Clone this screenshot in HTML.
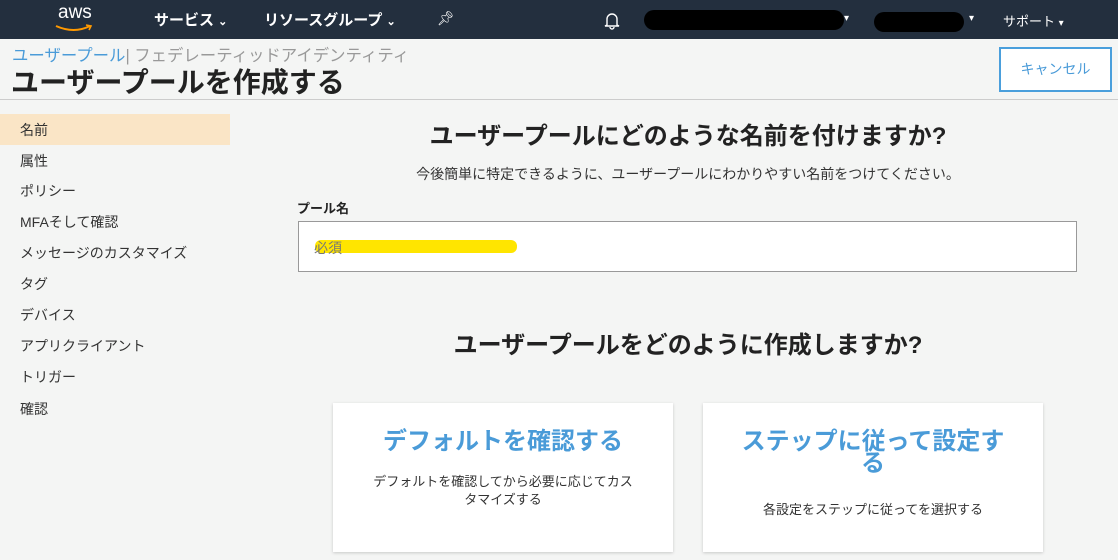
<!DOCTYPE html>
<html><head><meta charset="utf-8"><style>
*{margin:0;padding:0;box-sizing:border-box}
body{width:1118px;height:560px;overflow:hidden;background:#f4f5f4;font-family:"Liberation Sans","Noto Sans CJK JP",sans-serif;color:#333;position:relative}
.a{position:absolute;white-space:nowrap}
.nav{position:absolute;left:0;top:0;width:1118px;height:39px;background:#232f3e}
.nav .t{color:#fff;font-weight:bold;font-size:15px;top:9px}
.side{font-size:14px;color:#333;left:20px}
.card{position:absolute;top:403px;width:340px;height:149px;background:#fff;box-shadow:0 1px 3px rgba(0,0,0,.18);text-align:center}
.card h3{color:#4a9bd8;font-size:24px;line-height:22px;margin-top:28px;padding:0 30px;font-weight:bold}
.card p{font-size:13px;line-height:18px;margin-top:20px;padding:0 28px}
</style></head><body>
<div class="nav">
 <div class="a" style="left:58px;top:2px;color:#fff;font-size:19px">aws</div>
 <svg class="a" style="left:54px;top:24px" width="40" height="9"><path d="M2 2 Q20 10 36 2" stroke="#f90" stroke-width="2" fill="none"/><path d="M32 1 L37 2 L35 6" stroke="#f90" stroke-width="1.6" fill="none"/></svg>
 <div class="a t" style="left:154px">サービス <span style="font-size:11px">⌄</span></div>
 <div class="a t" style="left:264px">リソースグループ <span style="font-size:11px">⌄</span></div>
 <div class="a" style="left:437px;top:10px;color:#fff;font-size:14px">📌︎</div>
 <svg class="a" style="left:603px;top:10px" width="18" height="20"><path d="M4 15 V9 a5 5 0 0 1 10 0 V15 L16 16 H2 Z M7 17 a2 2 0 0 0 4 0" stroke="#fff" stroke-width="1.4" fill="none"/></svg>
 <div class="a" style="left:644px;top:10px;width:200px;height:20px;background:#000;border-radius:10px"></div>
 <div class="a" style="left:844px;top:13px;color:#fff;font-size:10px">▾</div>
 <div class="a" style="left:874px;top:12px;width:90px;height:20px;background:#000;border-radius:10px"></div>
 <div class="a" style="left:969px;top:13px;color:#fff;font-size:10px">▾</div>
 <div class="a" style="left:1003px;top:11px;color:#fff;font-size:13px">サポート <span style="font-size:10px">▾</span></div>
</div>
<div class="a" style="left:12px;top:42px;font-size:16.4px;color:#999"><span style="color:#4a9bd8">ユーザープール</span>| フェデレーティッドアイデンティティ</div>
<div class="a" style="left:11px;top:61px;font-size:28px;font-weight:bold;color:#222">ユーザープールを作成する</div>
<div class="a" style="left:999px;top:47px;width:113px;height:45px;border:2px solid #4a9fdc;background:#fff;color:#4a9bd8;font-size:14px;text-align:center;line-height:41px">キャンセル</div>
<div class="a" style="left:0;top:99px;width:1118px;height:1px;background:#ccc"></div>
<div class="a" style="left:0;top:114px;width:230px;height:31px;background:#fae5c6"></div>
<div class="a side" style="top:120px">名前</div>
<div class="a side" style="top:151px">属性</div>
<div class="a side" style="top:181px">ポリシー</div>
<div class="a side" style="top:212px">MFAそして確認</div>
<div class="a side" style="top:243px">メッセージのカスタマイズ</div>
<div class="a side" style="top:274px">タグ</div>
<div class="a side" style="top:305px">デバイス</div>
<div class="a side" style="top:336px">アプリクライアント</div>
<div class="a side" style="top:367px">トリガー</div>
<div class="a side" style="top:399px">確認</div>
<div class="a" style="left:298px;width:780px;top:116px;text-align:center;font-size:24px;font-weight:bold;color:#222">ユーザープールにどのような名前を付けますか?</div>
<div class="a" style="left:298px;width:780px;top:164px;text-align:center;font-size:14px">今後簡単に特定できるように、ユーザープールにわかりやすい名前をつけてください。</div>
<div class="a" style="left:297px;top:198px;font-size:13px;font-weight:bold;color:#222">プール名</div>
<div class="a" style="left:298px;top:221px;width:779px;height:51px;background:#fff;border:1px solid #999"></div>
<div class="a" style="left:315px;top:240px;width:202px;height:13px;background:#ffe500;border-radius:6px"></div>
<div class="a" style="left:314px;top:238px;font-size:14px;color:#777">必須</div>
<div class="a" style="left:298px;width:780px;top:325px;text-align:center;font-size:24px;font-weight:bold;color:#222">ユーザープールをどのように作成しますか?</div>
<div class="card" style="left:333px"><h3>デフォルトを確認する</h3><p style="padding:0 30px">デフォルトを確認してから必要に応じてカス<br>タマイズする</p></div>
<div class="card" style="left:703px"><h3>ステップに従って設定する</h3><p style="margin-top:26px">各設定をステップに従ってを選択する</p></div>
</body></html>
